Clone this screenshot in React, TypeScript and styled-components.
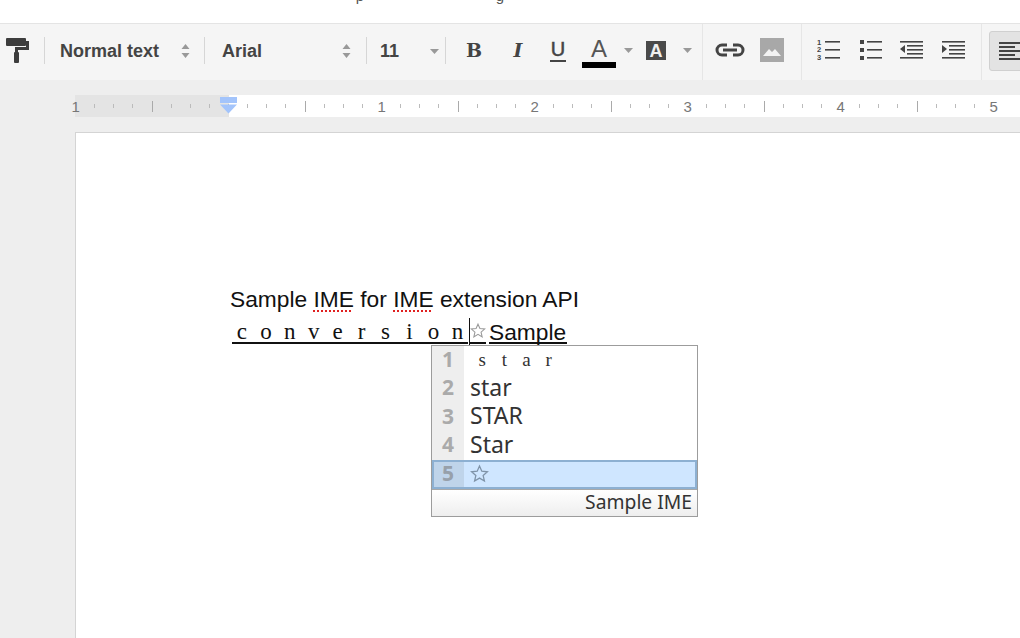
import React from "react";
import styled, { createGlobalStyle } from "styled-components";

const Global = createGlobalStyle`
  html, body {
    margin: 0;
    padding: 0;
    background: #fff;
  }
`;

const Screen = styled.div`
  width: 1020px;
  height: 638px;
  overflow: hidden;
  display: flex;
  flex-direction: column;
  background: #eeeeee;
  font-family: "Liberation Sans", Arial, sans-serif;
`;

const MenuStrip = styled.div`
  height: 23px;
  flex: none;
  background: #fff;
  overflow: hidden;
  display: flex;
  font-size: 15px;
  line-height: 10px;
  color: #555;
`;

const Clipped = styled.span<{ $w: number }>`
  display: block;
  width: ${(p) => p.$w}px;
  margin-top: -9px;
  text-align: right;
`;

const Toolbar = styled.div`
  height: 57px;
  flex: none;
  box-sizing: border-box;
  display: flex;
  align-items: stretch;
  background: #f5f5f5;
  border-top: 1px solid #e4e4e4;
`;

const Cell = styled.div<{ $w: number }>`
  width: ${(p) => p.$w}px;
  flex: none;
  box-sizing: border-box;
  padding-bottom: 4px;
  display: flex;
  align-items: center;
  justify-content: center;
  color: #444;
`;

const PaintCell = styled(Cell)`
  justify-content: flex-start;
  padding-left: 6px;
`;

const Sep = styled.div`
  width: 1px;
  flex: none;
  margin: 13px 0 16px;
  background: #d6d6d6;
`;

const TallSep = styled.div`
  width: 1px;
  flex: none;
  background: #e6e6e6;
`;

const Select = styled.div<{ $w: number; $pl: number; $pr: number }>`
  width: ${(p) => p.$w}px;
  flex: none;
  box-sizing: border-box;
  padding: 0 ${(p) => p.$pr}px 2px ${(p) => p.$pl}px;
  display: flex;
  align-items: center;
  justify-content: space-between;
  font-size: 18px;
  font-weight: 700;
  color: #444;
`;

const Glyph = styled.span<{ $serif?: boolean; $italic?: boolean }>`
  font-family: ${(p) => (p.$serif ? '"DejaVu Serif"' : '"Liberation Sans"')}, sans-serif;
  font-style: ${(p) => (p.$italic ? "italic" : "normal")};
  font-weight: 700;
  font-size: 19px;
  line-height: 22px;
  color: #444;
`;

const UnderGlyph = styled(Glyph)`
  font-size: 20px;
  font-weight: 400;
  line-height: 21px;
  -webkit-text-stroke: 0.5px #444;
  border-bottom: 2px solid #444;
  padding: 0 1px;
`;

const ColorButton = styled.div`
  display: flex;
  flex-direction: column;
  align-items: center;
  width: 34px;
  margin-top: 3px;
  font-size: 24px;
  line-height: 26px;
  color: #555;
`;

const ColorBar = styled.div`
  width: 34px;
  height: 6px;
  background: #000;
`;

const HighlightBox = styled.div`
  width: 20px;
  height: 19px;
  background: #4a4a4a;
  color: #f0f0f0;
  font-size: 18px;
  line-height: 20px;
  font-weight: 700;
  text-align: center;
`;

const AlignButton = styled.div`
  width: 60px;
  flex: none;
  margin: 7px 0 9px 7px;
  padding: 0 0 0 9px;
  box-sizing: border-box;
  display: flex;
  align-items: center;
  background: #e3e3e3;
  border: 1px solid #d0d0d0;
  border-radius: 3px;
`;

const RulerRow = styled.div`
  height: 52px;
  flex: none;
  box-sizing: border-box;
  padding: 15px 0 15px 75px;
`;

const Ruler = styled.div`
  position: relative;
  height: 22px;
  background: linear-gradient(to right, #e4e4e4 154px, #fff 154px);
`;

const RulerTrack = styled.div`
  display: flex;
  height: 100%;
  margin-left: -9px;
`;

const RulerCell = styled.div`
  width: 19.125px;
  flex: none;
  display: flex;
  align-items: center;
  justify-content: center;
  font-size: 15px;
  color: #777;
`;

const RulerTick = styled.div<{ $long?: boolean }>`
  width: 1px;
  height: ${(p) => (p.$long ? 11 : 4)}px;
  background: ${(p) => (p.$long ? "#aaa" : "#bbb")};
`;

const IndentMark = styled.svg`
  position: absolute;
  left: 145px;
  top: 2px;
`;

const Page = styled.div`
  position: relative;
  flex: 1;
  margin-left: 75px;
  padding: 150px 0 0 154px;
  background: #fff;
  border: 1px solid #d4d4d4;
  border-width: 1px 0 0 1px;
  font-size: 22.75px;
  line-height: 32px;
  color: #111;
`;

const Line = styled.div`
  white-space: nowrap;
  height: 35px;
`;

const Misspelled = styled.span`
  text-decoration: underline dotted #e02020 2px;
  text-underline-offset: 3px;
`;

const Composition = styled.div`
  display: flex;
  align-items: flex-start;
  height: 33px;
  margin-left: 2px;
`;

const Composing = styled.div`
  display: flex;
  width: 236px;
  flex: none;
  height: 24px;
  border-bottom: 2px solid #111;
  font-family: "Liberation Serif", serif;
  font-size: 23px;
  line-height: 27px;

  & > :first-child {
    margin-left: -2px;
  }
`;

const SpacedChar = styled.span<{ $w: number }>`
  display: block;
  flex: none;
  width: ${(p) => p.$w}px;
  text-align: center;
`;

const Caret = styled.div`
  width: 1px;
  height: 27px;
  flex: none;
  margin: 0 0 0 1px;
  background: #111;
`;

const StarRun = styled.div`
  width: 16px;
  height: 24px;
  margin-right: 3px;
  border-bottom: 2px solid #111;
  display: flex;
  align-items: center;
  justify-content: center;
  overflow: visible;
`;

const SampleRun = styled.div`
  width: 78px;
  height: 24px;
  border-bottom: 2px solid #111;
  line-height: 28px;
`;

const Popup = styled.div`
  position: absolute;
  left: 355px;
  top: 212px;
  width: 267px;
  height: 172px;
  box-sizing: border-box;
  border: 1px solid #9c9c9c;
  background: #fff;
  display: flex;
  flex-direction: column;
  line-height: 1.2;
`;

const Row = styled.div<{ $active?: boolean }>`
  height: 28.5px;
  flex: none;
  display: flex;
  align-items: center;
  box-sizing: border-box;
  background: ${(p) => (p.$active ? "#cfe6ff" : "#fff")};
  ${(p) => (p.$active ? "outline: 2px solid #8db0d2; outline-offset: -2px;" : "")}
  font-family: "Noto Sans", "Open Sans", sans-serif;
  font-size: 23px;
  color: #333;
`;

const Num = styled.div<{ $active?: boolean }>`
  width: 32px;
  height: 100%;
  flex: none;
  box-sizing: border-box;
  padding-bottom: 2px;
  display: flex;
  align-items: center;
  justify-content: center;
  background: ${(p) => (p.$active ? "#bfd4ea" : "#eeeeee")};
  color: ${(p) => (p.$active ? "#97a0aa" : "#aaa")};
  font-weight: 700;
  font-size: 21px;
`;

const Candidate = styled.div`
  padding: 0 0 2px 6px;
  display: flex;
  align-items: center;
`;

const SpacedCandidate = styled(Candidate)`
  padding: 0 0 0 7px;
  font-family: "Liberation Serif", serif;
  font-size: 19px;
  color: #333;
`;

const Footer = styled.div`
  flex: 1;
  box-sizing: border-box;
  border-top: 1px solid #a8a8a8;
  padding: 0 5px 2px 0;
  display: flex;
  align-items: center;
  justify-content: flex-end;
  background: linear-gradient(#fff, #eeeeee);
  font-family: "Noto Sans", "Open Sans", sans-serif;
  font-size: 19.3px;
  color: #333;
`;

const Spinner = () => (
  <svg width="9" height="16" viewBox="0 0 9 16">
    <path d="M4.5 1 8.5 6H.5zM4.5 15 .5 10h8z" fill="#999" />
  </svg>
);

const Caretdown = () => (
  <svg width="9" height="5" viewBox="0 0 9 5">
    <path d="M0 0h9L4.5 5z" fill="#999" />
  </svg>
);

const Roller = () => (
  <svg width="23" height="25" viewBox="0 0 23 25">
    <rect x="0" y="0" width="20" height="8" rx="1" fill="#3d3d3d" />
    <path d="M20 3h3v9H12v3h-3v-6h11z" fill="#3d3d3d" />
    <rect x="8" y="14" width="5" height="11" rx="1" fill="#3d3d3d" />
  </svg>
);

const LinkIcon = () => (
  <svg width="30" height="14" viewBox="0 0 30 14" fill="none" stroke="#444" strokeWidth="3">
    <path d="M12 2H7a5 5 0 0 0 0 10h5M18 2h5a5 5 0 0 1 0 10h-5M8 7h14" />
  </svg>
);

const ImageIcon = () => (
  <svg width="24" height="24" viewBox="0 0 24 24">
    <rect width="24" height="24" fill="#a8a8a8" />
    <path d="M3 18 9 11l3 3 3-3 6 7z" fill="#f2f2f2" />
  </svg>
);

const lines = (x: number, w: number, ys: number[], sw = 1.6) =>
  ys.map((y) => <rect key={y} x={x} y={y} width={w} height={sw} fill="#444" />);

const NumberedIcon = () => (
  <svg width="24" height="22" viewBox="0 0 24 22">
    {[6, 13, 21].map((y, i) => (
      <text key={y} x="0" y={y} fontSize="7.5" fontWeight="700" fontFamily="Liberation Sans" fill="#444">
        {i + 1}
      </text>
    ))}
    {lines(8, 15, [2, 10, 18])}
  </svg>
);

const BulletIcon = () => (
  <svg width="24" height="22" viewBox="0 0 24 22">
    {[1, 9, 17].map((y) => (
      <rect key={y} x="1" y={y} width="4" height="4" fill="#444" />
    ))}
    {lines(8, 15, [2, 10, 18])}
  </svg>
);

const OutdentIcon = () => (
  <svg width="24" height="20" viewBox="0 0 24 20">
    {lines(0, 23, [1, 17])}
    {lines(7, 16, [5, 9, 13])}
    <path d="M5 5v8L0 9z" fill="#444" />
  </svg>
);

const IndentIcon = () => (
  <svg width="24" height="20" viewBox="0 0 24 20">
    {lines(0, 23, [1, 17])}
    {lines(7, 16, [5, 9, 13])}
    <path d="M0 5v8l5-4z" fill="#444" />
  </svg>
);

const AlignLeftIcon = () => (
  <svg width="24" height="20" viewBox="0 0 24 20">
    {lines(0, 24, [1, 9, 17], 2)}
    {lines(0, 16, [5, 13], 2)}
  </svg>
);

const StarIcon = ({ size, color }: { size: number; color: string }) => (
  <svg width={size} height={size} viewBox="0 0 24 24" fill="none" stroke={color} strokeWidth="1.6">
    <path d="M12 2.5l2.9 6.6 7.1.7-5.4 4.7 1.6 7-6.2-3.7-6.2 3.7 1.6-7L2 9.8l7.1-.7z" />
  </svg>
);

const rulerCells = Array.from({ length: 49 }, (_, i) => {
  const n = i - 8;
  if (i === 0) return { key: i, label: "1" };
  if (n > 0 && n % 8 === 0) return { key: i, label: String(n / 8) };
  if (n % 4 === 0 && n !== 0) return { key: i, long: true };
  return { key: i };
});

const candidates = ["star", "STAR", "Star"];

export default function App() {
  return (
    <Screen>
      <Global />
      <MenuStrip>
        <Clipped $w={364}>p</Clipped>
        <Clipped $w={140}>g</Clipped>
      </MenuStrip>
      <Toolbar>
        <PaintCell $w={44}>
          <Roller />
        </PaintCell>
        <Sep />
        <Select $w={159} $pl={15} $pr={14}>
          Normal text
          <Spinner />
        </Select>
        <Sep />
        <Select $w={161} $pl={17} $pr={15}>
          Arial
          <Spinner />
        </Select>
        <Sep />
        <Select $w={78} $pl={13} $pr={6}>
          11
          <Caretdown />
        </Select>
        <Sep />
        <Cell $w={56}>
          <Glyph $serif>B</Glyph>
        </Cell>
        <Cell $w={32}>
          <Glyph $serif $italic>
            I
          </Glyph>
        </Cell>
        <Cell $w={48}>
          <UnderGlyph>U</UnderGlyph>
        </Cell>
        <Cell $w={34}>
          <ColorButton>
            A
            <ColorBar />
          </ColorButton>
        </Cell>
        <Cell $w={24}>
          <Caretdown />
        </Cell>
        <Cell $w={32}>
          <HighlightBox>A</HighlightBox>
        </Cell>
        <Cell $w={30}>
          <Caretdown />
        </Cell>
        <TallSep />
        <Cell $w={54}>
          <LinkIcon />
        </Cell>
        <Cell $w={29}>
          <ImageIcon />
        </Cell>
        <Cell $w={15} />
        <TallSep />
        <Cell $w={53}>
          <NumberedIcon />
        </Cell>
        <Cell $w={31}>
          <BulletIcon />
        </Cell>
        <Cell $w={51}>
          <OutdentIcon />
        </Cell>
        <Cell $w={34}>
          <IndentIcon />
        </Cell>
        <Cell $w={10} />
        <TallSep />
        <AlignButton>
          <AlignLeftIcon />
        </AlignButton>
      </Toolbar>
      <RulerRow>
        <Ruler>
          <RulerTrack>
            {rulerCells.map((c) => (
              <RulerCell key={c.key}>{c.label ?? <RulerTick $long={c.long} />}</RulerCell>
            ))}
          </RulerTrack>
          <IndentMark width="17" height="17" viewBox="0 0 17 17">
            <rect width="17" height="6" fill="#a3c4fb" />
            <path d="M0 7.5h17l-8.5 9z" fill="#a3c4fb" />
          </IndentMark>
        </Ruler>
      </RulerRow>
      <Page>
        <Line>
          Sample <Misspelled>IME</Misspelled> for <Misspelled>IME</Misspelled> extension API
        </Line>
        <Composition>
          <Composing>
            {"conversion".split("").map((ch, i) => (
              <SpacedChar key={i} $w={23.95}>
                {ch}
              </SpacedChar>
            ))}
          </Composing>
          <Caret />
          <StarRun>
            <StarIcon size={19} color="#999" />
          </StarRun>
          <SampleRun>Sample</SampleRun>
        </Composition>
        <Popup>
          <Row>
            <Num>1</Num>
            <SpacedCandidate>
              {"star".split("").map((ch, i) => (
                <SpacedChar key={i} $w={22.2}>
                  {ch}
                </SpacedChar>
              ))}
            </SpacedCandidate>
          </Row>
          {candidates.map((c, i) => (
            <Row key={c}>
              <Num>{i + 2}</Num>
              <Candidate>{c}</Candidate>
            </Row>
          ))}
          <Row $active>
            <Num $active>5</Num>
            <Candidate>
              <StarIcon size={19} color="#7f93a8" />
            </Candidate>
          </Row>
          <Footer>Sample IME</Footer>
        </Popup>
      </Page>
    </Screen>
  );
}
